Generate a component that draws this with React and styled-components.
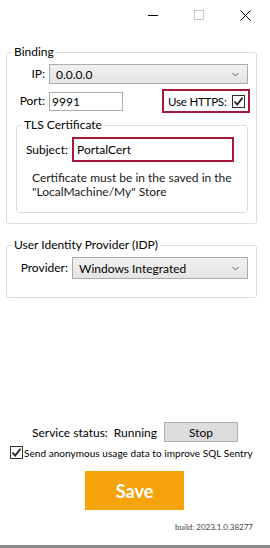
import React from 'react';
import styled, { createGlobalStyle } from 'styled-components';

const GlobalStyle = createGlobalStyle`
  html, body {
    margin: 0;
    padding: 0;
    background: #ffffff;
  }
  body {
    font-family: 'Lato', 'Noto Sans', sans-serif;
    font-size: 12px;
    color: #000000;
  }
`;

const Page = styled.div`
  width: 270px;
  height: 548px;
  display: flex;
  flex-direction: column;
  box-sizing: border-box;
  overflow: hidden;
`;

const TitleBar = styled.div`
  height: 30px;
  display: flex;
  justify-content: flex-end;
  padding-right: 2px;
`;

const CaptionButton = styled.div`
  width: 46px;
  height: 30px;
  display: flex;
  align-items: center;
  justify-content: center;
`;

const Group = styled.fieldset`
  margin: ${(p) => p.$top || 0}px ${(p) => p.$right || 0}px 0 ${(p) => p.$left || 0}px;
  padding: ${(p) => p.$padTop || 4}px 0 ${(p) => p.$padBottom || 10}px 5px;
  border: 1px solid #d5dfe5;
  border-radius: 3px;
  min-width: 0;
`;

const Legend = styled.legend`
  padding: 0 2px;
  font-size: 12px;
  line-height: 16px;
  color: #000;
`;

const FormGrid = styled.div`
  display: grid;
  grid-template-columns: ${(p) => p.$labelWidth}px 1fr;
  column-gap: 4px;
  row-gap: ${(p) => p.$rowGap || 5}px;
  align-items: center;
  padding-right: 8px;
`;

const Label = styled.label`
  text-align: right;
  font-size: 12px;
  line-height: 16px;
  white-space: nowrap;
`;

const ComboBox = styled.div`
  height: ${(p) => p.$height}px;
  box-sizing: border-box;
  border: 1px solid #acacac;
  background: linear-gradient(#f0f0f0, #e5e5e5);
  display: flex;
  align-items: center;
  justify-content: space-between;
  padding: 0 8px 0 6px;
  font-size: 12px;
`;

const PortRow = styled.div`
  display: flex;
  align-items: center;
  justify-content: space-between;
  margin-right: -2px;
`;

const TextBox = styled.div`
  width: 74px;
  height: 19px;
  box-sizing: border-box;
  border: 1px solid #abadb3;
  background: #fff;
  display: flex;
  align-items: center;
  padding-left: 2px;
  font-size: 12px;
`;

const Highlight = styled.div`
  border: 2px solid #a4193a;
  box-sizing: border-box;
  height: ${(p) => p.$height}px;
  width: ${(p) => p.$width}px;
  display: flex;
  align-items: center;
  justify-content: ${(p) => (p.$spread ? 'space-between' : 'flex-start')};
  padding: 0 ${(p) => (p.$spread ? 3 : 0)}px 0 ${(p) => p.$padLeft || 3}px;
  font-size: 12px;
  white-space: nowrap;
`;

const CheckLabel = styled.span`
  font-size: 11.5px;
  letter-spacing: -0.2px;
`;

const Check = styled.span`
  width: 13px;
  height: 13px;
  box-sizing: border-box;
  border: 1px solid #333;
  background: #fff;
  display: inline-flex;
  align-items: center;
  justify-content: center;
  flex-shrink: 0;
`;

const Note = styled.p`
  margin: 9px 8px 0 10px;
  font-size: 12px;
  line-height: 14px;
  color: #1a1a1a;
`;

const Footer = styled.div`
  margin-top: auto;
  display: flex;
  flex-direction: column;
`;

const StatusRow = styled.div`
  height: 20px;
  display: flex;
  align-items: center;
  justify-content: center;
  gap: 6px;
  font-size: 12px;
`;

const StopButton = styled.button`
  width: 74px;
  height: 20px;
  margin-left: 1px;
  border: 1px solid #adadad;
  background: #dddddd;
  font-family: inherit;
  font-size: 12px;
  color: #000;
  padding: 0;
`;

const ConsentRow = styled.div`
  margin-top: 3px;
  height: 15px;
  display: flex;
  align-items: center;
  gap: 1px;
  padding-left: 10px;
  font-size: 10px;
  letter-spacing: 0.05px;
  white-space: nowrap;
`;

const SaveButton = styled.button`
  align-self: center;
  margin: 11px 0 0 -1px;
  width: 99px;
  height: 39px;
  border: none;
  background: #f7a30b;
  color: #fff;
  font-family: inherit;
  font-weight: 700;
  font-size: 18px;
`;

const Build = styled.div`
  margin-top: 12px;
  height: 11px;
  text-align: right;
  padding-right: 17px;
  font-size: 8px;
  line-height: 11px;
  color: #444;
`;

const BottomBar = styled.div`
  margin-top: 12px;
  height: 3px;
  background: #8a8a8a;
`;

const Chevron = () => (
  <svg width="7" height="5" viewBox="0 0 7 5">
    <path d="M0.5 1 L3.5 4 L6.5 1" fill="none" stroke="#606060" strokeWidth="1" />
  </svg>
);

const CheckMark = () => (
  <svg width="11" height="11" viewBox="0 0 11 11">
    <path d="M1.5 5.5 L4.2 8.5 L9.5 1.8" fill="none" stroke="#222" strokeWidth="1.8" />
  </svg>
);

export default function App() {
  return (
    <>
      <GlobalStyle />
      <Page>
        <TitleBar>
          <CaptionButton>
            <svg width="10" height="10" viewBox="0 0 10 10">
              <path d="M0 5.5 H10" stroke="#000" strokeWidth="1" />
            </svg>
          </CaptionButton>
          <CaptionButton>
            <svg width="10" height="10" viewBox="0 0 10 10">
              <rect x="0.5" y="0.5" width="9" height="9" fill="none" stroke="#c8c8c8" strokeWidth="1" />
            </svg>
          </CaptionButton>
          <CaptionButton>
            <svg width="11" height="11" viewBox="0 0 11 11">
              <path d="M0.5 0.5 L10.5 10.5 M10.5 0.5 L0.5 10.5" stroke="#000" strokeWidth="1" />
            </svg>
          </CaptionButton>
        </TitleBar>

        <Group $top={14} $left={6} $right={13} $padTop={4} $padBottom={10}>
          <Legend>Binding</Legend>
          <FormGrid $labelWidth={33} $rowGap={5}>
            <Label>IP:</Label>
            <ComboBox $height={20}>
              <span>0.0.0.0</span>
              <Chevron />
            </ComboBox>
            <Label>Port:</Label>
            <PortRow>
              <TextBox>9991</TextBox>
              <Highlight $height={24} $width={88} $padLeft={4} $spread>
                <CheckLabel>Use HTTPS:</CheckLabel>
                <Check>
                  <CheckMark />
                </Check>
              </Highlight>
            </PortRow>
          </FormGrid>
          <Group $top={4} $left={4} $right={8} $padTop={4} $padBottom={13}>
            <Legend>TLS Certificate</Legend>
            <FormGrid $labelWidth={46} $rowGap={0}>
              <Label>Subject:</Label>
              <Highlight $height={25} $width={162} $padLeft={3}>
                PortalCert
              </Highlight>
            </FormGrid>
            <Note>
              Certificate must be in the saved in the "LocalMachine/My" Store
            </Note>
          </Group>
        </Group>

        <Group $top={13} $left={6} $right={13} $padTop={4} $padBottom={18}>
          <Legend>User Identity Provider (IDP)</Legend>
          <FormGrid $labelWidth={56} $rowGap={0}>
            <Label>Provider:</Label>
            <ComboBox $height={22}>
              <span>Windows Integrated</span>
              <Chevron />
            </ComboBox>
          </FormGrid>
        </Group>

        <Footer>
          <StatusRow>
            <span>Service status:</span>
            <span>Running</span>
            <StopButton>Stop</StopButton>
          </StatusRow>
          <ConsentRow>
            <Check>
              <CheckMark />
            </Check>
            <span>Send anonymous usage data to improve SQL Sentry</span>
          </ConsentRow>
          <SaveButton>Save</SaveButton>
          <Build>build: 2023.1.0.38277</Build>
          <BottomBar />
        </Footer>
      </Page>
    </>
  );
}
